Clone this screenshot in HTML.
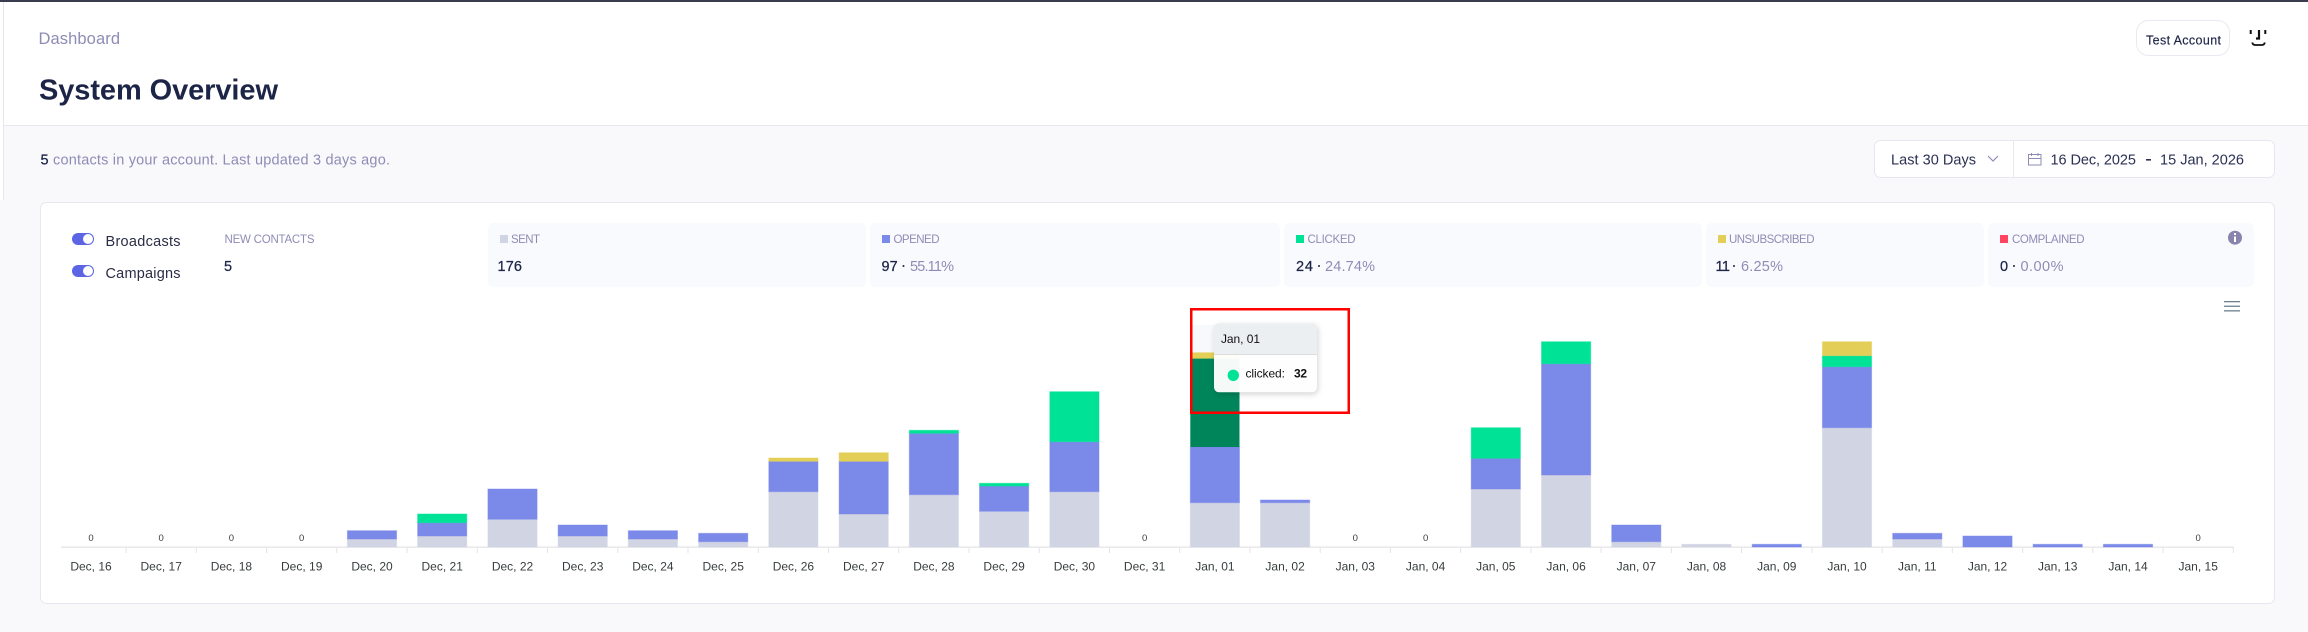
<!DOCTYPE html>
<html lang="en">
<head>
<meta charset="utf-8">
<title>System Overview</title>
<style>
html,body{margin:0;padding:0;background:#f9f9fc;width:2308px;height:632px;overflow:hidden}
svg{display:block;position:absolute;left:0;top:0;font-family:"Liberation Sans",sans-serif}
.m{fill:#8e8cb5}
.d{fill:#1c2447}
.lb{font-size:11.5px;fill:#8e8cb5}
.v{font-size:14.5px;fill:#1c2447;stroke:#1c2447;stroke-width:.25}
.p{font-size:14.5px;fill:#8e8cb5}
.t{font-size:14.5px;fill:#2b3054}
.box{fill:#f9fafd}
.s,.o,.c,.u{stroke-width:1;stroke-opacity:.45}
.s{fill:#d1d4e3;stroke:#d1d4e3}
.o{fill:#7b89e9;stroke:#7b89e9}
.c{fill:#00e396;stroke:#00e396}
.u{fill:#e3cf57;stroke:#e3cf57}
.x{font-size:12px;fill:#373d3f;text-anchor:middle}
.z{font-size:9.5px;fill:#373d3f;text-anchor:middle}
.tk{stroke:#e4e4e8;stroke-width:1}
</style>
</head>
<body>
<svg width="2308" height="632" viewBox="0 0 2308 632" xmlns="http://www.w3.org/2000/svg">
<!-- page chrome -->
<rect x="0" y="0" width="2308" height="632" fill="#f9f9fc"/>
<rect x="0" y="0" width="2308" height="125" fill="#fff"/>
<rect x="0" y="125" width="3" height="75" fill="#fff"/>
<rect x="3" y="2" width="1" height="198" fill="#e6e6ec"/>
<rect x="3" y="125" width="2305" height="1" fill="#e6e8ef"/>
<rect x="0" y="0" width="2308" height="2" fill="#3a3d4f"/>

<text x="38.5" y="44" font-size="16.5" class="m" textLength="81.5" lengthAdjust="spacing">Dashboard</text>
<text x="39" y="99.3" font-size="29" font-weight="bold" class="d" textLength="239" lengthAdjust="spacing">System Overview</text>

<!-- account -->
<rect x="2136.5" y="20.5" width="93" height="35" rx="12" fill="#fff" stroke="#e8eaf2"/>
<text x="2146" y="44.3" font-size="12.5" fill="#1c2447" stroke="#1c2447" stroke-width=".15" textLength="75" lengthAdjust="spacing">Test Account</text>
<rect x="2249.7" y="30" width="2" height="4" fill="#111"/>
<rect x="2264.3" y="30" width="2" height="4" fill="#111"/>
<path d="M2259 30V38.5H2256" fill="none" stroke="#111" stroke-width="2.2"/>
<path d="M2252.3 42.5Q2252.6 45 2255.5 45H2261.5Q2264.5 45 2264.8 42.5" fill="none" stroke="#111" stroke-width="1.8"/>

<!-- summary -->
<text x="40.5" y="164.5" font-size="14.5" fill="#1c2447" stroke="#1c2447" stroke-width=".25">5</text>
<text x="53" y="164.5" font-size="14.5" class="m" textLength="337" lengthAdjust="spacing">contacts in your account. Last updated 3 days ago.</text>

<!-- date control -->
<rect x="1874.5" y="140.5" width="400" height="37" rx="6" fill="#fff" stroke="#e6e8f0"/>
<rect x="2013" y="141" width="1" height="36" fill="#e6e8f0"/>
<text x="1891" y="164.5" class="t" textLength="85" lengthAdjust="spacing">Last 30 Days</text>
<path d="M1988 156L1993 161L1998 156" fill="none" stroke="#8e8cb5" stroke-width="1.2"/>
<g fill="none" stroke="#8e8cb5" stroke-width="1">
<rect x="2028.5" y="154.5" width="12.5" height="10.5"/>
<path d="M2028.5 158.5H2041M2031.5 153V156M2038 153V156"/>
</g>
<text x="2050.5" y="164.5" class="t" textLength="85.5" lengthAdjust="spacing">16 Dec, 2025</text>
<rect x="2146" y="159" width="5" height="1.6" fill="#2b3054"/>
<text x="2160" y="164.5" class="t" textLength="84" lengthAdjust="spacing">15 Jan, 2026</text>

<!-- card -->
<rect x="40.5" y="202.5" width="2234" height="401" rx="6" fill="#fff" stroke="#e6e8f0"/>

<!-- toggles -->
<rect x="72" y="233" width="22" height="12" rx="6" fill="#5b65e6"/>
<circle cx="88" cy="239" r="5" fill="#fff"/>
<text x="105.5" y="246" font-size="14.5" fill="#2a2d45" textLength="75" lengthAdjust="spacing">Broadcasts</text>
<rect x="72" y="265" width="22" height="12" rx="6" fill="#5b65e6"/>
<circle cx="88" cy="271" r="5" fill="#fff"/>
<text x="105.5" y="278" font-size="14.5" fill="#2a2d45" textLength="75" lengthAdjust="spacing">Campaigns</text>

<!-- stats -->
<text x="224.5" y="243" class="lb" textLength="90" lengthAdjust="spacing">NEW CONTACTS</text>
<text x="224" y="271" class="v">5</text>

<rect class="box" x="488" y="223" width="378" height="64" rx="5"/>
<rect x="500" y="235" width="8" height="8" fill="#d1d4e3"/>
<text x="511" y="243" class="lb" textLength="29" lengthAdjust="spacing">SENT</text>
<text x="497.5" y="271" class="v" textLength="24.5" lengthAdjust="spacing">176</text>

<rect class="box" x="870" y="223" width="410" height="64" rx="5"/>
<rect x="882" y="235" width="8" height="8" fill="#7b89e9"/>
<text x="893.5" y="243" class="lb" textLength="46" lengthAdjust="spacing">OPENED</text>
<text x="881.5" y="271" class="v" textLength="16.2" lengthAdjust="spacing">97</text>
<circle cx="903.5" cy="266" r="1" fill="#1c2447"/>
<text x="910" y="271" class="p" textLength="44" lengthAdjust="spacing">55.11%</text>

<rect class="box" x="1284" y="223" width="418" height="64" rx="5"/>
<rect x="1296" y="235" width="8" height="8" fill="#00e396"/>
<text x="1307.5" y="243" class="lb" textLength="48" lengthAdjust="spacing">CLICKED</text>
<text x="1296" y="271" class="v" textLength="17" lengthAdjust="spacing">24</text>
<circle cx="1319" cy="266" r="1" fill="#1c2447"/>
<text x="1325" y="271" class="p" textLength="50" lengthAdjust="spacing">24.74%</text>

<rect class="box" x="1706" y="223" width="278" height="64" rx="5"/>
<rect x="1718" y="235" width="8" height="8" fill="#e3cf57"/>
<text x="1729" y="243" class="lb" textLength="85.5" lengthAdjust="spacing">UNSUBSCRIBED</text>
<text x="1715.5" y="271" class="v" textLength="14.5" lengthAdjust="spacing">11</text>
<circle cx="1734" cy="266" r="1" fill="#1c2447"/>
<text x="1741" y="271" class="p" textLength="42" lengthAdjust="spacing">6.25%</text>

<rect class="box" x="1988" y="223" width="266" height="64" rx="5"/>
<rect x="2000" y="235" width="8" height="8" fill="#ff4560"/>
<text x="2012" y="243" class="lb" textLength="72.5" lengthAdjust="spacing">COMPLAINED</text>
<text x="2000" y="271" class="v">0</text>
<circle cx="2014" cy="266" r="1" fill="#1c2447"/>
<text x="2020.5" y="271" class="p" textLength="43" lengthAdjust="spacing">0.00%</text>
<circle cx="2235" cy="237.7" r="7" fill="#8884ad"/>
<rect x="2234" y="233" width="2" height="2" fill="#fff"/>
<rect x="2234" y="236.5" width="2" height="5.5" fill="#fff"/>

<!-- chart menu -->
<g fill="#6e8192">
<rect x="2224" y="301" width="16" height="1.3"/>
<rect x="2224" y="305.6" width="16" height="1.3"/>
<rect x="2224" y="310.2" width="16" height="1.3"/>
</g>

<!-- axis -->
<rect x="61" y="546.5" width="2172.5" height="1.3" fill="#e4e4e8"/>
<path class="tk" d="M126.1 547V553M196.3 547V553M266.6 547V553M336.8 547V553M407.1 547V553M477.3 547V553M547.5 547V553M617.8 547V553M688 547V553M758.3 547V553M828.5 547V553M898.7 547V553M969 547V553M1039.2 547V553M1109.5 547V553M1179.7 547V553M1249.9 547V553M1320.2 547V553M1390.4 547V553M1460.7 547V553M1530.9 547V553M1601.1 547V553M1671.4 547V553M1741.6 547V553M1811.9 547V553M1882.1 547V553M1952.3 547V553M2022.6 547V553M2092.8 547V553M2163.1 547V553M2233.3 547V553"/>

<!-- bars -->
<g>
<!-- Dec 20 -->
<rect class="s" x="347.4" y="539" width="49.2" height="8"/>
<rect class="o" x="347.4" y="530.7" width="49.2" height="8.3"/>
<!-- Dec 21 -->
<rect class="s" x="417.6" y="536" width="49.2" height="11"/>
<rect class="o" x="417.6" y="522.7" width="49.2" height="13.3"/>
<rect class="c" x="417.6" y="514" width="49.2" height="8.7"/>
<!-- Dec 22 -->
<rect class="s" x="487.9" y="519.3" width="49.2" height="27.7"/>
<rect class="o" x="487.9" y="489" width="49.2" height="30.3"/>
<!-- Dec 23 -->
<rect class="s" x="558.1" y="536" width="49.2" height="11"/>
<rect class="o" x="558.1" y="525" width="49.2" height="11"/>
<!-- Dec 24 -->
<rect class="s" x="628.3" y="539" width="49.2" height="8"/>
<rect class="o" x="628.3" y="530.7" width="49.2" height="8.3"/>
<!-- Dec 25 -->
<rect class="s" x="698.6" y="541.7" width="49.2" height="5.3"/>
<rect class="o" x="698.6" y="533.3" width="49.2" height="8.4"/>
<!-- Dec 26 -->
<rect class="s" x="768.8" y="491.7" width="49.2" height="55.3"/>
<rect class="o" x="768.8" y="461.3" width="49.2" height="30.4"/>
<rect class="u" x="768.8" y="458" width="49.2" height="3.3"/>
<!-- Dec 27 -->
<rect class="s" x="839.1" y="514" width="49.2" height="33"/>
<rect class="o" x="839.1" y="461.3" width="49.2" height="52.7"/>
<rect class="u" x="839.1" y="452.7" width="49.2" height="8.6"/>
<!-- Dec 28 -->
<rect class="s" x="909.3" y="494.7" width="49.2" height="52.3"/>
<rect class="o" x="909.3" y="433.3" width="49.2" height="61.4"/>
<rect class="c" x="909.3" y="430.3" width="49.2" height="3"/>
<!-- Dec 29 -->
<rect class="s" x="979.5" y="511.3" width="49.2" height="35.7"/>
<rect class="o" x="979.5" y="486" width="49.2" height="25.3"/>
<rect class="c" x="979.5" y="483.3" width="49.2" height="2.7"/>
<!-- Dec 30 -->
<rect class="s" x="1049.8" y="491.7" width="49.2" height="55.3"/>
<rect class="o" x="1049.8" y="441.7" width="49.2" height="50"/>
<rect class="c" x="1049.8" y="391.7" width="49.2" height="50"/>
<!-- Jan 01 -->
<rect x="1190.3" y="325" width="49.2" height="28" fill="#f7f9fd"/>
<rect class="s" x="1190.3" y="502.7" width="49.2" height="44.3"/>
<rect class="o" x="1190.3" y="447" width="49.2" height="55.7"/>
<rect x="1190.3" y="358.3" width="49.2" height="88.7" fill="#00855a"/>
<rect class="u" x="1190.3" y="352.7" width="49.2" height="5.6"/>
<!-- Jan 02 -->
<rect class="s" x="1260.5" y="502.7" width="49.2" height="44.3"/>
<rect class="o" x="1260.5" y="500" width="49.2" height="2.7"/>
<!-- Jan 05 -->
<rect class="s" x="1471.2" y="489" width="49.2" height="58"/>
<rect class="o" x="1471.2" y="458.3" width="49.2" height="30.7"/>
<rect class="c" x="1471.2" y="427.7" width="49.2" height="30.6"/>
<!-- Jan 06 -->
<rect class="s" x="1541.5" y="475" width="49.2" height="72"/>
<rect class="o" x="1541.5" y="363.7" width="49.2" height="111.3"/>
<rect class="c" x="1541.5" y="341.7" width="49.2" height="22"/>
<!-- Jan 07 -->
<rect class="s" x="1611.7" y="541.7" width="49.2" height="5.3"/>
<rect class="o" x="1611.7" y="525" width="49.2" height="16.7"/>
<!-- Jan 08 -->
<rect class="s" x="1681.9" y="544.3" width="49.2" height="2.7"/>
<!-- Jan 09 -->
<rect class="o" x="1752.2" y="544.3" width="49.2" height="2.7"/>
<!-- Jan 10 -->
<rect class="s" x="1822.4" y="427.7" width="49.2" height="119.3"/>
<rect class="o" x="1822.4" y="366.7" width="49.2" height="61"/>
<rect class="c" x="1822.4" y="355.7" width="49.2" height="11"/>
<rect class="u" x="1822.4" y="341.7" width="49.2" height="14"/>
<!-- Jan 11 -->
<rect class="s" x="1892.7" y="539" width="49.2" height="8"/>
<rect class="o" x="1892.7" y="533.3" width="49.2" height="5.7"/>
<!-- Jan 12 -->
<rect class="o" x="1962.9" y="536" width="49.2" height="11"/>
<!-- Jan 13 -->
<rect class="o" x="2033.1" y="544.3" width="49.2" height="2.7"/>
<!-- Jan 14 -->
<rect class="o" x="2103.4" y="544.3" width="49.2" height="2.7"/>
</g>

<!-- zero labels -->
<text class="z" x="91" y="541">0</text>
<text class="z" x="161.2" y="541">0</text>
<text class="z" x="231.4" y="541">0</text>
<text class="z" x="301.7" y="541">0</text>
<text class="z" x="1144.6" y="541">0</text>
<text class="z" x="1355.3" y="541">0</text>
<text class="z" x="1425.6" y="541">0</text>
<text class="z" x="2198.2" y="541">0</text>

<!-- axis labels -->
<text class="x" x="91" y="570.5">Dec, 16</text>
<text class="x" x="161.2" y="570.5">Dec, 17</text>
<text class="x" x="231.4" y="570.5">Dec, 18</text>
<text class="x" x="301.7" y="570.5">Dec, 19</text>
<text class="x" x="372" y="570.5">Dec, 20</text>
<text class="x" x="442.2" y="570.5">Dec, 21</text>
<text class="x" x="512.5" y="570.5">Dec, 22</text>
<text class="x" x="582.7" y="570.5">Dec, 23</text>
<text class="x" x="652.9" y="570.5">Dec, 24</text>
<text class="x" x="723.2" y="570.5">Dec, 25</text>
<text class="x" x="793.4" y="570.5">Dec, 26</text>
<text class="x" x="863.7" y="570.5">Dec, 27</text>
<text class="x" x="933.9" y="570.5">Dec, 28</text>
<text class="x" x="1004.1" y="570.5">Dec, 29</text>
<text class="x" x="1074.4" y="570.5">Dec, 30</text>
<text class="x" x="1144.6" y="570.5">Dec, 31</text>
<text class="x" x="1214.9" y="570.5">Jan, 01</text>
<text class="x" x="1285.1" y="570.5">Jan, 02</text>
<text class="x" x="1355.3" y="570.5">Jan, 03</text>
<text class="x" x="1425.6" y="570.5">Jan, 04</text>
<text class="x" x="1495.8" y="570.5">Jan, 05</text>
<text class="x" x="1566.1" y="570.5">Jan, 06</text>
<text class="x" x="1636.3" y="570.5">Jan, 07</text>
<text class="x" x="1706.5" y="570.5">Jan, 08</text>
<text class="x" x="1776.8" y="570.5">Jan, 09</text>
<text class="x" x="1847" y="570.5">Jan, 10</text>
<text class="x" x="1917.3" y="570.5">Jan, 11</text>
<text class="x" x="1987.5" y="570.5">Jan, 12</text>
<text class="x" x="2057.7" y="570.5">Jan, 13</text>
<text class="x" x="2128" y="570.5">Jan, 14</text>
<text class="x" x="2198.2" y="570.5">Jan, 15</text>

<!-- annotation rectangle -->
<rect x="1191.25" y="309.25" width="157.5" height="103.5" fill="none" stroke="#ff0000" stroke-width="2.5"/>

<!-- tooltip -->
<rect x="1214" y="323.3" width="103" height="69" rx="5" fill="#fff" fill-opacity=".96" style="filter:drop-shadow(1px 2px 3px rgba(0,0,0,.18))"/>
<path d="M1219 323.3H1312A5 5 0 0 1 1317 328.3V354.3H1214V328.3A5 5 0 0 1 1219 323.3Z" fill="#eceff1"/>
<rect x="1214" y="354" width="103" height="1" fill="#ddd"/>
<text x="1221" y="343" font-size="12" fill="#111" textLength="39" lengthAdjust="spacing">Jan, 01</text>
<circle cx="1233.3" cy="375.3" r="5.7" fill="#00e396"/>
<text x="1245.5" y="377.7" font-size="12" fill="#111" textLength="39.5" lengthAdjust="spacing">clicked:</text>
<text x="1294" y="377.7" font-size="12" font-weight="bold" fill="#111" textLength="13" lengthAdjust="spacing">32</text>
</svg>
</body>
</html>
